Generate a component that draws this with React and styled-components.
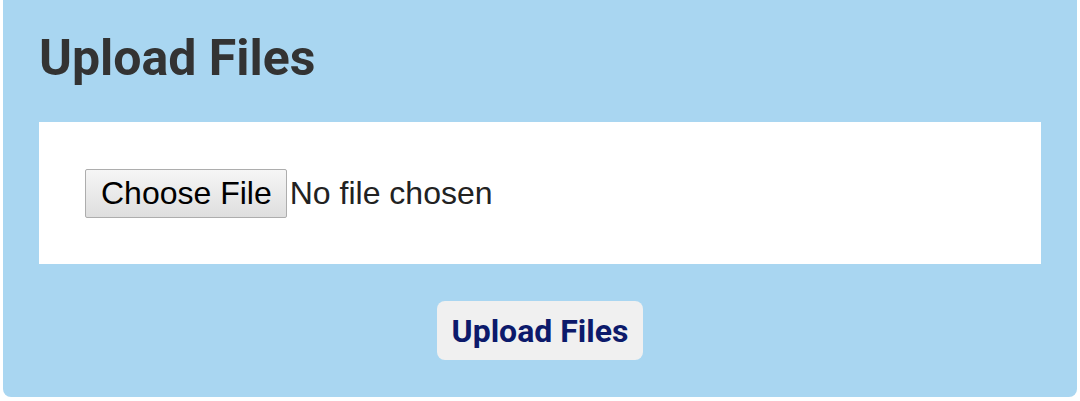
import React from 'react';
import styled, { createGlobalStyle } from 'styled-components';

const GlobalStyle = createGlobalStyle`
  html, body {
    margin: 0;
    padding: 0;
    background: #ffffff;
  }
`;

const Panel = styled.div`
  box-sizing: border-box;
  width: 1074px;
  height: 397px;
  margin: 0 3px;
  padding: 0 36px;
  background: #a9d6f1;
  border-radius: 0 0 8px 8px;
  display: flex;
  flex-direction: column;
  font-family: Roboto, "Liberation Sans", sans-serif;
`;

const Title = styled.h1`
  margin: 0;
  padding-top: 28px;
  height: 122px;
  box-sizing: border-box;
  font-size: 50px;
  font-weight: 700;
  line-height: 60px;
  color: #333333;
`;

const FileBox = styled.div`
  box-sizing: border-box;
  height: 142px;
  background: #ffffff;
  padding: 46px;
  display: flex;
  align-items: center;
`;

const ChooseButton = styled.label`
  box-sizing: border-box;
  height: 49px;
  padding: 0 14px 0 15px;
  display: flex;
  align-items: center;
  border: 1px solid #adadad;
  border-radius: 2px;
  background: linear-gradient(#f6f6f6, #dedede);
  font-family: "Liberation Sans", Arial, sans-serif;
  font-size: 32px;
  color: #000000;
  cursor: pointer;
`;

const FileName = styled.span`
  margin-left: 3px;
  font-family: "Liberation Sans", Arial, sans-serif;
  font-size: 32px;
  color: #222222;
`;

const Footer = styled.div`
  flex: 1;
  display: flex;
  align-items: center;
  justify-content: center;
`;

const UploadButton = styled.button`
  box-sizing: border-box;
  width: 206px;
  height: 59px;
  border: none;
  border-radius: 8px;
  background: #f0f0f0;
  color: #0c1a6b;
  font-family: Roboto, "Liberation Sans", sans-serif;
  font-size: 32px;
  font-weight: 700;
  cursor: pointer;
`;

export default function App() {
  return (
    <>
      <GlobalStyle />
      <Panel>
        <Title>Upload Files</Title>
        <FileBox>
          <ChooseButton>Choose File</ChooseButton>
          <FileName>No file chosen</FileName>
        </FileBox>
        <Footer>
          <UploadButton>Upload Files</UploadButton>
        </Footer>
      </Panel>
    </>
  );
}
